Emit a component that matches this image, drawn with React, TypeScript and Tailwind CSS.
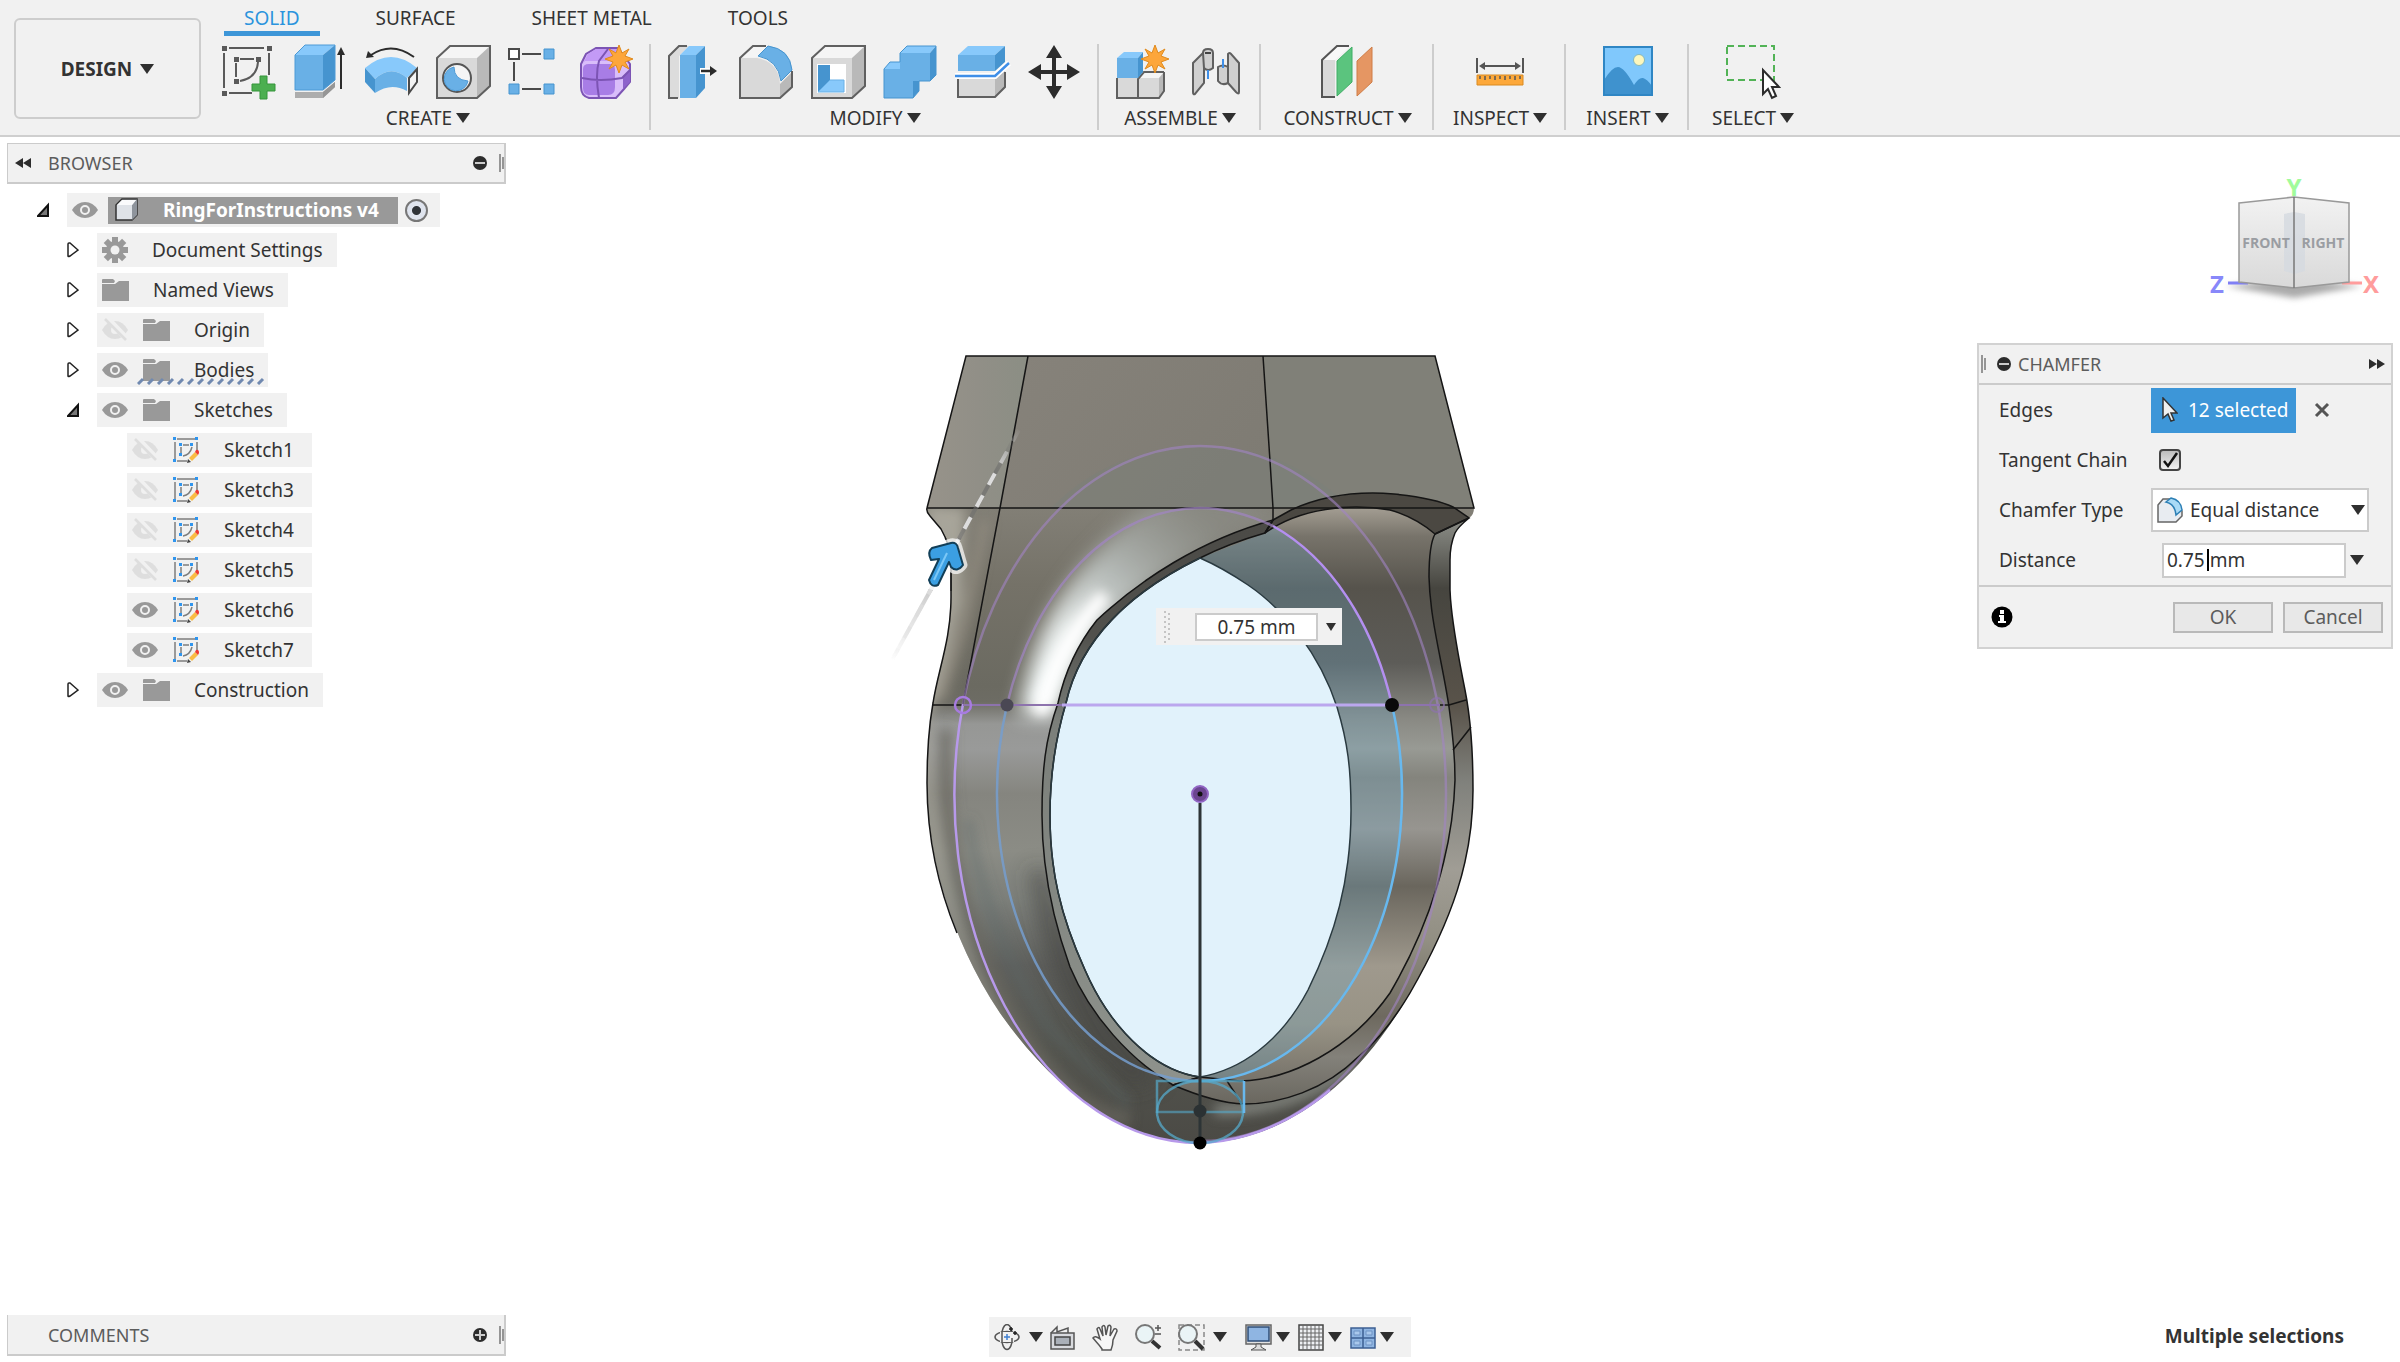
import { useState } from "react";
import type { ReactNode } from "react";
import clsx from "clsx";

const MODEL_OUTLINE =
  "M966 356H1435L1474 508Q1474 515 1469 518Q1458 527 1455 533Q1450 545 1450 560V590C1451 620 1460 665 1465 690C1470 715 1473 745 1473 790C1473 860 1452 920 1410 993C1350 1098 1270 1143 1200 1143C1130 1143 1060 1098 1000 1013C948 935 927 850 927 783C927 745 930 720 933 703C938 670 951 640 951 597V560Q950 545 941 529L930 516Q926 512 927 508Z";

const OPENING =
  "M1200 558Q1223 568 1248 585C1285 610 1320 655 1337 707C1348 743 1351 770 1351 810C1351 880 1335 935 1308 990C1280 1043 1240 1070 1200 1077C1150 1070 1108 1023 1085 970C1060 915 1050 870 1050 815C1050 770 1058 730 1066 703C1080 640 1130 592 1200 558Z";

const INNER_WALL =
  "M1200 558L1265 533C1300 508 1350 503 1390 510Q1415 517 1435 534Q1429 545 1429 577C1430 620 1442 660 1449 707C1453 735 1455 760 1455 780C1453 850 1430 925 1390 993C1350 1050 1290 1080 1240 1081L1200 1077C1240 1070 1280 1043 1308 990C1335 935 1351 880 1351 810C1351 770 1348 743 1337 707C1320 655 1285 610 1248 585Q1223 568 1200 558Z";

const RIM_STRIP =
  "M1273 520C1200 540 1140 580 1097 620C1073 650 1063 680 1058 703C1045 740 1042 770 1042 815C1042 870 1053 920 1070 967C1090 1015 1130 1060 1173 1085L1200 1077C1150 1070 1108 1023 1085 970C1060 915 1050 870 1050 815C1050 770 1058 730 1066 703C1080 640 1130 592 1200 558Q1230 543 1265 533Z";

const TOP_LIP =
  "M1273 520L1291 510C1330 492 1370 492 1394 494Q1435 498 1453 507L1469 518L1435 534Q1415 517 1390 510C1350 503 1300 508 1265 533Z";

const OUTER_RIGHT =
  "M1435 534L1469 518Q1458 527 1455 533Q1450 545 1450 560V590C1451 620 1460 665 1465 690C1470 715 1473 745 1473 790C1473 860 1452 920 1410 993Q1385 1035 1358 1057C1325 1090 1280 1104 1244 1104Q1215 1103 1173 1085L1200 1077L1240 1081C1290 1080 1350 1050 1390 993C1430 925 1453 850 1455 780C1455 760 1453 735 1449 707C1442 660 1430 620 1429 577Q1429 545 1435 534Z";

function Caret({ className = "w-3.5 h-2.5" }: { className?: string }) {
  return (
    <svg viewBox="0 0 14 10" preserveAspectRatio="none" className={clsx("shrink-0 fill-[#2f2f2f]", className)}>
      <path d="M0 0H14L7 10Z" />
    </svg>
  );
}

function Icon({ children, className = "size-14" }: { children: ReactNode; className?: string }) {
  return (
    <svg viewBox="0 0 56 56" fill="none" className={clsx("shrink-0", className)}>
      {children}
    </svg>
  );
}

const STAR = "M0-14L3-6L10-10L6-3L14 0L6 3L10 10L3 6L0 14L-3 6L-10 10L-6 3L-14 0L-6-3L-10-10L-3-6Z";

function SketchIcon() {
  return (
    <Icon>
      <g stroke="#5a5a5a" strokeWidth="2">
        <path d="M9 4H44M4 9V44M49 9V31M9 49H32M20 15H34M16 19V33M38 18Q37 34 20 37" />
      </g>
      <g fill="#5a5a5a">
        <path d="M2 2h5v5H2zM47 2h5v5h-5zM2 47h5v5H2zM14 13h5v5h-5zM36 13h5v5h-5zM14 35h5v5h-5z" />
      </g>
      <path d="M40 32h7v8h8v7h-8v8h-7v-8h-8v-7h8z" fill="#4caf50" stroke="#35953a" />
    </Icon>
  );
}

function ExtrudeIcon() {
  return (
    <Icon>
      <path d="M3 48H31L43 38V43L31 54H3Z" fill="#adadad" />
      <path d="M31 48L43 38V43L31 54Z" fill="#969696" />
      <path d="M3 11H31V46H3Z" fill="#69b0e6" />
      <path d="M3 11L13 1H43L31 11Z" fill="#88c9fb" />
      <path d="M31 11L43 1V36L31 46Z" fill="#4694cf" />
      <path d="M3 11L13 1H43V36L31 46H3Z" stroke="#4c9ad6" />
      <path d="M49 9V45" stroke="#2c2c2c" strokeWidth="2" />
      <path d="M49 3L53 11H45Z" fill="#2c2c2c" />
    </Icon>
  );
}

function RevolveIcon() {
  return (
    <Icon>
      <path d="M50 13Q28-3 7 11" stroke="#2c2c2c" strokeWidth="2" />
      <path d="M2 14L4 7L10 13Z" fill="#2c2c2c" />
      <path d="M1 24Q27 2 53 24L43 34Q27 20 11 35Z" fill="#88c9fb" />
      <path d="M11 35Q27 20 43 34V47Q27 38 11 49Z" fill="#69b0e6" />
      <path d="M1 24L11 35V49L1 38Z" fill="#4694cf" />
      <path d="M53 25L45 34V49L53 38Z" fill="#f4f4f4" stroke="#4a4a4a" strokeWidth="2" />
    </Icon>
  );
}

function Box({ window: win }: { window?: ReactNode }) {
  return (
    <>
      <path d="M1 14H41V54H1Z" fill="#d9d9d9" />
      <path d="M1 14L14 2H54L41 14Z" fill="#f5f5f5" />
      <path d="M41 14L54 2V42L41 54Z" fill="#b9b9b9" />
      <path d="M1 14L14 2H54V42L41 54H1Z" stroke="#606060" strokeWidth="2" />
      {win}
    </>
  );
}

function HoleIcon() {
  return (
    <Icon>
      <Box
        window={
          <>
            <circle cx="21" cy="34" r="14" fill="#f5f5f5" stroke="#555" strokeWidth="2" />
            <path d="M18 23A12 12 0 1 0 32 37Q18 36 18 23Z" fill="#69b0e6" stroke="#4c9ad6" />
          </>
        }
      />
    </Icon>
  );
}

function PatternIcon() {
  return (
    <Icon>
      <path d="M14 10H33M6 18V37M14 45H33" stroke="#4a4a4a" strokeWidth="2" />
      <path d="M1 5h10v10H1z" fill="#fff" stroke="#4a4a4a" strokeWidth="2" />
      <path d="M36 5h10v10H36zM1 40h10v10H1zM36 40h10v10H36z" fill="#69b0e6" stroke="#4694cf" />
    </Icon>
  );
}

function FormIcon() {
  return (
    <Icon>
      <path d="M1 20L6 10L16 4H38L50 20V38L44 45L36 54H9Q1 52 1 43Z" fill="#d9bdfa" stroke="#7c54b4" strokeWidth="2" />
      <path d="M3 19L8 10L16 5H38L34 17H5Z" fill="#c39af6" />
      <path d="M9 20H30Q35 20 35 26V43Q35 51 28 51H9Q3 51 3 44V25Q3 20 9 20Z" fill="#a87de6" />
      <path d="M43 32L50 26V38L43 45Z" fill="#8d62cb" />
      <path d="M2 34Q20 38 42 34L50 26M19 54Q15 30 19 17L28 5" stroke="#7c54b4" strokeWidth="2" />
      <path d={STAR} transform="translate(39 15)" fill="#fda63a" stroke="#e08a1c" />
    </Icon>
  );
}

function PressPullIcon() {
  return (
    <Icon>
      <path d="M2 12L12 2H22L12 12V54H2Z" fill="#dcdcdc" />
      <path d="M20 2H12L2 12V54H11" stroke="#606060" strokeWidth="2" />
      <path d="M13 11H29V54H13Z" fill="#69b0e6" />
      <path d="M13 11L22 2H38L29 11Z" fill="#88c9fb" />
      <path d="M29 11L38 2V44L29 54Z" fill="#4694cf" />
      <path d="M33 27H44" stroke="#fff" strokeWidth="6" />
      <path d="M34 27H45" stroke="#2c2c2c" strokeWidth="2.5" />
      <path d="M43 22L50 27L43 32Z" fill="#2c2c2c" />
    </Icon>
  );
}

function FilletIcon() {
  return (
    <Icon>
      <path d="M1 14H18Q40 18 41 40V54H1Z" fill="#d9d9d9" />
      <path d="M1 14L14 2H28L18 13Z" fill="#f5f5f5" />
      <path d="M41 40L53 28V43L41 54Z" fill="#b9b9b9" />
      <path d="M27 2H14L1 14V54H41L53 43V27" stroke="#606060" strokeWidth="2" />
      <path d="M19 12L29 2Q51 5 53 26L42 37Q39 16 19 12Z" fill="#69b0e6" stroke="#4694cf" />
    </Icon>
  );
}

function ShellIcon() {
  return (
    <Icon>
      <Box
        window={
          <>
            <path d="M6 20H35V49H6Z" fill="#fff" />
            <path d="M7 21H19V37L7 48Z" fill="#4694cf" />
            <path d="M19 36H33V48H7Z" fill="#88c9fb" stroke="#69b0e6" />
          </>
        }
      />
    </Icon>
  );
}

function CombineIcon() {
  return (
    <Icon>
      <path d="M1 25H17V9H47V37H30V54H1Z" fill="#69b0e6" />
      <path d="M1 25L7 18H17V25ZM17 9L24 2H53L47 9Z" fill="#88c9fb" />
      <path d="M47 9L53 2V31L47 37ZM30 37H36V47L30 54Z" fill="#4694cf" />
      <path d="M1 25L7 18H17V9L24 2H53V31L47 37H36V47L30 54H1Z" stroke="#4694cf" />
    </Icon>
  );
}

function SplitIcon() {
  return (
    <Icon>
      <path d="M3 11H40V27H3Z" fill="#69b0e6" />
      <path d="M3 11L13 2H50L40 11Z" fill="#88c9fb" />
      <path d="M40 11L50 2V18L40 27Z" fill="#4694cf" />
      <path d="M3 35H40L50 27V43L40 53H3Z" fill="#d9d9d9" />
      <path d="M40 35L50 27V43L40 53Z" fill="#b9b9b9" />
      <path d="M3 35V53H40L50 43V28" stroke="#606060" strokeWidth="2" />
      <path d="M0 32H40L54 19" stroke="#fff" strokeWidth="6" />
      <path d="M0 32H40L54 19" stroke="#3f8fe8" strokeWidth="2.5" />
    </Icon>
  );
}

function MoveIcon() {
  return (
    <Icon>
      <path d="M27 10V44M10 28H44" stroke="#2c2c2c" strokeWidth="4" />
      <path d="M27 1L35 14H19ZM27 55L35 42H19ZM1 28L14 20V36ZM53 28L40 20V36Z" fill="#2c2c2c" />
    </Icon>
  );
}

function ComponentIcon() {
  return (
    <Icon>
      <path d="M1 34H43V54H1Z" fill="#d9d9d9" />
      <path d="M22 34L28 28H48L43 34Z" fill="#f5f5f5" />
      <path d="M43 34L48 28V47L43 54Z" fill="#b9b9b9" />
      <path d="M1 34V54H43L48 47V28M22 54V35L28 28H48" stroke="#606060" strokeWidth="2" />
      <path d="M1 14H22V34H1Z" fill="#69b0e6" />
      <path d="M1 14L8 8H27L22 14Z" fill="#88c9fb" />
      <path d="M22 14L27 8V28L22 34Z" fill="#4694cf" />
      <path d={STAR} transform="translate(39 15)" fill="#fda63a" stroke="#e08a1c" />
    </Icon>
  );
}

function JointIcon() {
  return (
    <Icon>
      <g stroke="#606060" strokeWidth="2" fill="#d0d0d0">
        <path d="M5 19L16 8V39L7 50Q5 51 5 48Z" />
        <path d="M15 9Q15 5 20 5T25 9V24Q20 28 16 24Z" />
        <path d="M40 10Q42 8 43 10L51 19V48Q51 51 48 48L40 39Z" />
        <path d="M30 23Q35 20 40 23V39Q34 42 30 37Z" />
      </g>
      <path d="M17 9H23" stroke="#444" strokeWidth="2" />
      <path d="M20 26V35M35 15V24" stroke="#3f8fe8" strokeWidth="2" />
    </Icon>
  );
}

function PlaneIcon() {
  return (
    <Icon>
      <path d="M2 16H15V53H2Z" fill="#d9d9d9" />
      <path d="M2 16L17 2H30L15 16Z" fill="#f8f8f8" />
      <path d="M29 2H17L2 16V53H15" stroke="#555" strokeWidth="2" />
      <path d="M17 17L32 3V38L17 52Z" fill="#5bc47e" stroke="#3fae65" />
      <path d="M37 17L52 3V38L37 52Z" fill="#e59663" stroke="#cf7c46" />
    </Icon>
  );
}

function MeasureIcon() {
  return (
    <Icon>
      <path d="M5 14V29M51 14V29M10 22H46" stroke="#555" strokeWidth="2" />
      <path d="M7 22L13 18V26ZM49 22L43 18V26Z" fill="#555" />
      <path d="M5 31H51V41H5Z" fill="#fda83a" stroke="#d98a20" />
      <path d="M8 32V35M13 32V36M18 32V35M23 32V36M28 32V35M33 32V36M38 32V35M43 32V36M48 32V35" stroke="#555" strokeWidth="1.5" />
    </Icon>
  );
}

function ImageIcon() {
  return (
    <Icon>
      <path d="M4 3H52V51H4Z" fill="#80c8fc" />
      <path d="M4 36Q12 23 18 23T34 41Q39 33 43 34T52 42V51H4Z" fill="#3f92ce" />
      <circle cx="39" cy="16" r="5.5" fill="#fdf7bd" stroke="#88b8b8" />
      <path d="M4 3H52V51H4Z" stroke="#2f86c4" strokeWidth="2" />
    </Icon>
  );
}

function SelectIcon() {
  return (
    <Icon>
      <path d="M2 2H49V36H2Z" stroke="#52b356" strokeWidth="2" strokeDasharray="7 4" />
      <path d="M38 26V50L43 45L47 54L51 52L47 43H54Z" fill="#fff" stroke="#2c2c2c" strokeWidth="2" />
    </Icon>
  );
}

const TABS = ["SOLID", "SURFACE", "SHEET METAL", "TOOLS"];

const GROUPS: { label: string; width: string; tools: { name: string; icon: ReactNode }[] }[] = [
  {
    label: "CREATE",
    width: "w-[446px]",
    tools: [
      { name: "Create Sketch", icon: <SketchIcon /> },
      { name: "Extrude", icon: <ExtrudeIcon /> },
      { name: "Revolve", icon: <RevolveIcon /> },
      { name: "Hole", icon: <HoleIcon /> },
      { name: "Rectangular Pattern", icon: <PatternIcon /> },
      { name: "Create Form", icon: <FormIcon /> },
    ],
  },
  {
    label: "MODIFY",
    width: "w-[448px]",
    tools: [
      { name: "Press Pull", icon: <PressPullIcon /> },
      { name: "Fillet", icon: <FilletIcon /> },
      { name: "Shell", icon: <ShellIcon /> },
      { name: "Combine", icon: <CombineIcon /> },
      { name: "Split Body", icon: <SplitIcon /> },
      { name: "Move", icon: <MoveIcon /> },
    ],
  },
  {
    label: "ASSEMBLE",
    width: "w-[162px]",
    tools: [
      { name: "New Component", icon: <ComponentIcon /> },
      { name: "Joint", icon: <JointIcon /> },
    ],
  },
  { label: "CONSTRUCT", width: "w-[173px]", tools: [{ name: "Offset Plane", icon: <PlaneIcon /> }] },
  { label: "INSPECT", width: "w-[132px]", tools: [{ name: "Measure", icon: <MeasureIcon /> }] },
  { label: "INSERT", width: "w-[123px]", tools: [{ name: "Canvas", icon: <ImageIcon /> }] },
  { label: "SELECT", width: "w-[126px]", tools: [{ name: "Select", icon: <SelectIcon /> }] },
];

function Toolbar() {
  const [tab, setTab] = useState("SOLID");
  return (
    <header className="flex h-[137px] border-b-2 border-[#cfcfcf] bg-[#f1f1f1]">
      <button className="mt-[18px] ml-3.5 flex h-[101px] w-[187px] shrink-0 items-center justify-center gap-2 rounded-md border-2 border-[#cdcdcd] font-bold">
        DESIGN
        <Caret />
      </button>
      <div className="ml-1 flex flex-col">
        <nav className="ml-[19px] flex h-9 gap-9">
          {TABS.map((name) => (
            <button
              key={name}
              onClick={() => setTab(name)}
              className={clsx(
                "border-b-[5px] px-5 pt-1",
                tab === name ? "border-[#3d96d8] text-[#2b94dd]" : "border-transparent"
              )}
            >
              {name}
            </button>
          ))}
        </nav>
        <div className="mt-2 flex h-[86px]">
          {GROUPS.map((group) => (
            <div
              key={group.label}
              className={clsx(
                "flex shrink-0 flex-col items-center border-r-2 border-[#cdcdcd] pl-0.5 last:border-r-0",
                group.width
              )}
            >
              <div className="flex gap-4">
                {group.tools.map((tool) => (
                  <button key={tool.name} aria-label={tool.name}>
                    {tool.icon}
                  </button>
                ))}
              </div>
              <button className="mt-1.5 flex items-center gap-1 leading-6">
                {group.label}
                <Caret />
              </button>
            </div>
          ))}
        </div>
      </div>
    </header>
  );
}

function Eye({ off }: { off?: boolean }) {
  return (
    <button aria-label="Toggle visibility" className="shrink-0">
      <svg viewBox="0 0 26 26" fill="none" className="size-[26px]">
        {off ? (
          <>
            <path d="M0 13Q5 4 13 4T26 13Q21 22 13 22T0 13Z" fill="#dedede" />
            <circle cx="13" cy="13" r="4" fill="#f1f1f1" />
            <path d="M4 0L26 23" stroke="#f1f1f1" strokeWidth="6" />
            <path d="M3 2L24 23" stroke="#dedede" strokeWidth="2.5" />
          </>
        ) : (
          <>
            <path d="M0 13Q5 5 13 5T26 13Q21 21 13 21T0 13Z" fill="#999" />
            <circle cx="13" cy="13" r="4" stroke="#f1f1f1" strokeWidth="2" />
          </>
        )}
      </svg>
    </button>
  );
}

function Folder() {
  return (
    <svg viewBox="0 0 27 26" className="h-[26px] w-[27px] shrink-0 fill-[#999]">
      <path d="M0 3Q0 2 1 2H11L13 4L12 6H0ZM0 7H13L17 4H27V24H0Z" />
    </svg>
  );
}

function Gear() {
  return (
    <svg viewBox="-13 -13 26 26" className="size-[26px] shrink-0 fill-[#999]">
      {[0, 45, 90, 135].map((angle) => (
        <rect key={angle} x="-3" y="-13" width="6" height="26" transform={`rotate(${angle})`} />
      ))}
      <circle r="9" />
      <circle r="4.5" className="fill-[#f1f1f1]" />
    </svg>
  );
}

function SketchItemIcon() {
  return (
    <svg viewBox="0 0 27 27" fill="none" className="size-[27px] shrink-0">
      <path d="M4 2H22M2 5V22M24 5V14M4 24H14M10 8H16M8 10V16M19 10Q17 18 10 19" stroke="#7d7d7d" strokeWidth="1.5" />
      <path d="M0 0h3v3H0zM22 0h3v3h-3zM0 22h3v3H0zM6 6h3v3H6zM17 6h3v3h-3zM6 16h3v3H6z" fill="#2f95ee" />
      <path d="M16 21L22 15L25 18L19 24Z" fill="#f9bc45" />
      <path d="M22 15L23 13Q26 12 26 16L25 18Z" fill="#ee3a35" />
      <path d="M14 26L15 22L18 25Z" fill="#444" />
    </svg>
  );
}

function Expander({ open }: { open?: boolean }) {
  return (
    <button aria-label={open ? "Collapse" : "Expand"} className="shrink-0">
      <svg viewBox="0 0 12 16" fill="none" className="h-4 w-3">
        {open ? (
          <path d="M1 14L11 3V14Z" fill="#777" stroke="#111" strokeWidth="2" />
        ) : (
          <path d="M2 1Q1 1 1 2V14Q1 15 3 14L11 8L3 1Z" stroke="#222" strokeWidth="1.5" />
        )}
      </svg>
    </button>
  );
}

interface TreeItem {
  label: string;
  kind: "settings" | "views" | "folder" | "sketch";
  hidden?: boolean;
  open?: boolean;
  marked?: boolean;
}

const TREE: TreeItem[] = [
  { label: "Document Settings", kind: "settings" },
  { label: "Named Views", kind: "views" },
  { label: "Origin", kind: "folder", hidden: true },
  { label: "Bodies", kind: "folder", marked: true },
  { label: "Sketches", kind: "folder", open: true },
  { label: "Sketch1", kind: "sketch", hidden: true },
  { label: "Sketch3", kind: "sketch", hidden: true },
  { label: "Sketch4", kind: "sketch", hidden: true },
  { label: "Sketch5", kind: "sketch", hidden: true },
  { label: "Sketch6", kind: "sketch" },
  { label: "Sketch7", kind: "sketch" },
  { label: "Construction", kind: "folder" },
];

function TreeRow({ item }: { item: TreeItem }) {
  if (item.kind === "sketch") {
    return (
      <li className="ml-[127px] flex h-[34px] w-[185px] items-center bg-[#f1f1f1] pl-[5px]">
        <Eye off={item.hidden} />
        <span className="ml-[15px]">
          <SketchItemIcon />
        </span>
        <span className="ml-6">{item.label}</span>
      </li>
    );
  }
  const single = item.kind !== "folder";
  return (
    <li className="ml-[67px] flex h-[34px] items-center">
      <Expander open={item.open} />
      <div className="relative ml-[18px] flex h-full items-center bg-[#f1f1f1] pr-3.5 pl-[5px]">
        {item.kind === "settings" && <Gear />}
        {item.kind === "views" && <Folder />}
        {!single && (
          <>
            <Eye off={item.hidden} />
            <span className="ml-[15px]">
              <Folder />
            </span>
          </>
        )}
        <span className="ml-6">{item.label}</span>
        {item.marked && (
          <svg className="absolute bottom-0.5 left-10 h-2 w-32">
            <path
              d="M1 7l5-5m5 5l5-5m5 5l5-5m5 5l5-5m5 5l5-5m5 5l5-5m5 5l5-5m5 5l5-5m5 5l5-5m5 5l5-5m5 5l5-5m5 5l5-5m5 5l5-5"
              stroke="#7089b0"
              strokeWidth="3"
            />
          </svg>
        )}
      </div>
    </li>
  );
}

function DockHandle() {
  return (
    <svg viewBox="0 0 5 18" className="h-[18px] w-[5px] shrink-0">
      <path d="M1 0V18M4 3V15" stroke="#777" strokeWidth="1.5" />
    </svg>
  );
}

function RoundSign({ plus }: { plus?: boolean }) {
  return (
    <svg viewBox="0 0 14 14" fill="none" className="size-3.5">
      <circle cx="7" cy="7" r="7" fill="#2c2c2c" />
      <path d={plus ? "M2 7H12M7 2V12" : "M2 7H12"} stroke="#ccc" strokeWidth="2" />
    </svg>
  );
}

function DoubleArrow({ right }: { right?: boolean }) {
  return (
    <svg viewBox="0 0 16 10" className="h-2.5 w-4 fill-[#2c2c2c]">
      <path d={right ? "M0 0L8 5V0L16 5L8 10V5L0 10Z" : "M16 0L8 5V0L0 5L8 10V5L16 10Z"} />
    </svg>
  );
}

function Browser() {
  return (
    <section>
      <div className="mt-1.5 ml-[7px] flex h-[41px] w-[499px] items-center border-t border-r-2 border-b-2 border-l border-[#cbcbcb] bg-[#f1f1f1] pl-[7px]">
        <button aria-label="Collapse browser">
          <DoubleArrow />
        </button>
        <h2 className="ml-[17px] flex-1 text-lg text-[#5c5c5c]">BROWSER</h2>
        <button aria-label="Minimise browser" className="mr-3">
          <RoundSign />
        </button>
        <DockHandle />
      </div>
      <ul className="mt-[9px] flex flex-col gap-1.5">
        <li className="ml-[37px] flex h-[34px] items-center">
          <Expander open />
          <div className="ml-[18px] flex h-full items-center bg-[#f1f1f1] pr-3 pl-[5px]">
            <Eye />
            <div className="ml-2.5 flex h-[27px] w-[290px] items-center bg-[#999] pl-[7px] font-bold text-white">
              <svg viewBox="0 0 24 24" className="size-6">
                <path d="M1 7L7 1H22V17L17 22H1Z" fill="#dfe3e8" stroke="#333" strokeWidth="1.5" />
                <path d="M17 7L22 1V17L17 22Z" fill="#8e949c" />
                <path d="M2 7L7 2H21L17 7Z" fill="#fafbfc" />
              </svg>
              <span className="ml-6">RingForInstructions v4</span>
            </div>
            <input
              type="radio"
              name="active-component"
              defaultChecked
              aria-label="Activate component"
              className="ml-[7px] size-[23px] appearance-none rounded-full border-2 border-[#777] bg-[radial-gradient(circle,#2f3338_0_4px,#dfe4ee_5px)]"
            />
          </div>
        </li>
        {TREE.map((item) => (
          <TreeRow key={item.label} item={item} />
        ))}
      </ul>
    </section>
  );
}

function Comments() {
  return (
    <section className="mb-1.5 ml-[7px] flex h-[41px] w-[499px] items-center border-r-2 border-b-2 border-l border-[#cbcbcb] bg-[#f1f1f1] pl-10">
      <h2 className="flex-1 text-lg text-[#5c5c5c]">COMMENTS</h2>
      <button aria-label="Expand comments" className="mr-3">
        <RoundSign plus />
      </button>
      <DockHandle />
    </section>
  );
}

function RingModel() {
  return (
    <svg viewBox="880 340 640 820" fill="none" className="h-[820px] w-[640px]">
      <defs>
        <clipPath id="body">
          <path d={MODEL_OUTLINE} />
        </clipPath>
        <clipPath id="wall">
          <path d={INNER_WALL} />
        </clipPath>
        <linearGradient id="bodyFill" x1="0" y1="508" x2="0" y2="1143" gradientUnits="userSpaceOnUse">
          <stop offset="0" stopColor="#827f76" />
          <stop offset=".12" stopColor="#757268" />
          <stop offset=".28" stopColor="#6b6a61" />
          <stop offset=".305" stopColor="#6d6c64" />
          <stop offset=".34" stopColor="#969795" />
          <stop offset=".38" stopColor="#999a99" />
          <stop offset=".45" stopColor="#85857f" />
          <stop offset=".54" stopColor="#8b8c85" />
          <stop offset=".62" stopColor="#7b7e79" />
          <stop offset=".72" stopColor="#5e5f5c" />
          <stop offset=".85" stopColor="#53544e" />
          <stop offset="1" stopColor="#4b4a45" />
        </linearGradient>
        <linearGradient id="wallFill" x1="0" y1="508" x2="0" y2="1081" gradientUnits="userSpaceOnUse">
          <stop offset="0" stopColor="#a39d92" />
          <stop offset=".05" stopColor="#77736a" />
          <stop offset=".14" stopColor="#56534c" />
          <stop offset=".27" stopColor="#5d5c58" />
          <stop offset=".37" stopColor="#8a8a84" />
          <stop offset=".42" stopColor="#989a94" />
          <stop offset=".47" stopColor="#84847d" />
          <stop offset=".56" stopColor="#979590" />
          <stop offset=".66" stopColor="#6a665d" />
          <stop offset=".8" stopColor="#9f998d" />
          <stop offset=".9" stopColor="#989385" />
          <stop offset="1" stopColor="#77736a" />
        </linearGradient>
        <linearGradient id="rightFill" x1="0" y1="518" x2="0" y2="1104" gradientUnits="userSpaceOnUse">
          <stop offset="0" stopColor="#8d8f89" />
          <stop offset=".12" stopColor="#46453f" />
          <stop offset=".32" stopColor="#59534a" />
          <stop offset=".45" stopColor="#80817c" />
          <stop offset=".6" stopColor="#a09d95" />
          <stop offset=".72" stopColor="#928f83" />
          <stop offset=".85" stopColor="#6e695f" />
          <stop offset=".92" stopColor="#83817a" />
          <stop offset="1" stopColor="#6a675f" />
        </linearGradient>
        <linearGradient id="stripFill" x1="0" y1="520" x2="0" y2="1100" gradientUnits="userSpaceOnUse">
          <stop offset="0" stopColor="#4b4a46" />
          <stop offset=".2" stopColor="#51514d" />
          <stop offset=".35" stopColor="#7b7f7a" />
          <stop offset="1" stopColor="#8f938d" />
        </linearGradient>
        <linearGradient id="headLeft" x1="927" y1="0" x2="1028" y2="0" gradientUnits="userSpaceOnUse">
          <stop offset="0" stopColor="#97938a" />
          <stop offset=".5" stopColor="#918f87" />
          <stop offset="1" stopColor="#8b8e84" />
        </linearGradient>
        <linearGradient id="headMid" x1="1020" y1="360" x2="1230" y2="520" gradientUnits="userSpaceOnUse">
          <stop offset="0" stopColor="#86827a" />
          <stop offset="1" stopColor="#7e7b73" />
        </linearGradient>
        <linearGradient id="shine" x1="1200" y1="510" x2="1040" y2="715" gradientUnits="userSpaceOnUse">
          <stop offset="0" stopColor="#8e908a" stopOpacity=".6" />
          <stop offset=".4" stopColor="#b4b9b6" />
          <stop offset=".7" stopColor="#e9eeed" />
          <stop offset="1" stopColor="#f4fafa" />
        </linearGradient>
        <linearGradient id="guide" x1="892" y1="660" x2="1020" y2="428" gradientUnits="userSpaceOnUse">
          <stop offset="0" stopColor="#ddd" stopOpacity="0" />
          <stop offset=".3" stopColor="#ddd" />
          <stop offset=".8" stopColor="#ddd" />
          <stop offset="1" stopColor="#ddd" stopOpacity="0" />
        </linearGradient>
        <linearGradient id="guideBase" x1="892" y1="660" x2="1020" y2="428" gradientUnits="userSpaceOnUse">
          <stop offset="0" stopColor="#777" stopOpacity="0" />
          <stop offset=".4" stopColor="#777" stopOpacity=".5" />
          <stop offset=".8" stopColor="#666" stopOpacity=".6" />
          <stop offset="1" stopColor="#777" stopOpacity="0" />
        </linearGradient>
        <filter id="soft" x="-50%" y="-50%" width="200%" height="200%">
          <feGaussianBlur stdDeviation="10" />
        </filter>
        <filter id="softer" x="-50%" y="-50%" width="200%" height="200%">
          <feGaussianBlur stdDeviation="6" />
        </filter>
      </defs>

      <path d={MODEL_OUTLINE} fill="url(#bodyFill)" />
      <g clipPath="url(#body)">
        <g filter="url(#soft)">
          <path d="M1240 495H1160C1090 550 1035 610 1020 715H1060C1080 640 1140 570 1290 520Z" fill="url(#shine)" />
          <path d="M1045 870Q1070 980 1160 1080L1130 1090Q1050 1010 1030 870Z" fill="#474641" opacity=".7" />
        </g>
        <g filter="url(#softer)">
          <path d="M1110 600C1075 640 1055 680 1048 716L1033 714C1040 670 1070 620 1100 590Z" fill="#fff" />
          <path d="M925 505L965 508L962 600L935 705L920 720L940 600Z" fill="#b1afa4" opacity=".8" />
          <path d="M985 520L965 620L940 700" stroke="#8e897e" strokeWidth="10" />
          <path d="M925 700Q920 870 985 995T1130 1150" stroke="#a8a599" strokeWidth="12" opacity=".6" />
          <path d="M946 730Q940 870 1000 990T1130 1120" stroke="#6b6961" strokeWidth="14" opacity=".7" />
          <path d="M968 820Q985 930 1050 1030L1130 1105" stroke="#5b6769" strokeWidth="8" opacity=".5" />
          <path d="M1215 1110Q1290 1112 1355 1064" stroke="#878a84" strokeWidth="10" />
        </g>
      </g>

      <path d="M966 356H1028L1000 508H927Z" fill="url(#headLeft)" />
      <path d="M1028 356H1263L1273 508H1000Z" fill="url(#headMid)" />
      <path d="M1263 356H1435L1474 508H1273Z" fill="#808078" />
      <path d="M1051 508Q1110 448 1200 447T1350 508Z" fill="#79807b" opacity=".35" />

      <path d={OUTER_RIGHT} fill="url(#rightFill)" />
      <path d={INNER_WALL} fill="url(#wallFill)" />
      <g clipPath="url(#wall)">
        <ellipse cx="1200" cy="794" rx="203" ry="287" fill="#6bacd0" opacity=".26" />
      </g>
      <path d={TOP_LIP} fill="#4b4842" />
      <path d={RIM_STRIP} fill="url(#stripFill)" />
      <path d={OPENING} fill="#e1f2fb" />

      <g stroke="#151515" strokeWidth="1.5">
        <path d="M927 508L966 356H1435L1474 508H927M1028 356L1000 508L963 704M1263 356L1270 461L1273 508V520L1265 533" />
        <path d="M927 508Q926 512 930 516L941 529Q950 545 951 560V597C951 640 938 670 933 703C930 720 927 745 927 783Q927 860 957 933" />
        <path d={OUTER_RIGHT} />
        <path d={TOP_LIP} />
        <path d={RIM_STRIP} />
        <path d={OPENING} stroke="#2a3a40" />
        <path d="M933 705H1058M1392 705H1449L1466 700M1453 750L1471 727" />
        <path d="M1227 1081L1242 1104" />
      </g>

      <g strokeWidth="2.5">
        <path d="M963 704A246 348 0 0 1 1200 446A246 348 0 0 1 1446 793A246 348 0 0 1 1200 1141" stroke="#a184c4" opacity=".6" />
        <path d="M963 704A246 348 0 0 0 1200 1143Q1270 1140 1330 1090" stroke="#b799ea" />
        <path d="M1007 705A203 287 0 0 1 1200 508Q1235 508 1273 526" stroke="#a184c4" opacity=".7" />
        <path d="M1273 526A203 287 0 0 1 1392 705" stroke="#b48ff0" />
        <path d="M1007 705A203 287 0 0 0 1200 1081" stroke="#759dce" opacity=".85" />
        <path d="M1392 705A203 287 0 0 1 1200 1081" stroke="#68b8ee" />
      </g>
      <path d="M963 705H1062M1335 705H1440" stroke="#8d73ad" strokeWidth="2" />
      <path d="M1062 705H1392" stroke="#bba7ee" strokeWidth="3" />

      <g stroke="#55aacb" strokeWidth="2.5">
        <path d="M1157 1113V1081H1244" opacity=".7" />
        <path d="M1157 1112H1244" opacity=".6" />
        <ellipse cx="1200" cy="1112" rx="43" ry="31" opacity=".75" />
        <path d="M1244 1081V1113" stroke="#68b8ee" />
      </g>
      <path d="M1200 803V1142" stroke="#2d3436" strokeWidth="3" />
      <circle cx="1200" cy="794" r="8" fill="#6b4690" stroke="#9166c4" strokeWidth="2" />
      <circle cx="1200" cy="794" r="2.5" fill="#111" />
      <circle cx="1392" cy="705" r="7" fill="#0a0a0a" />
      <circle cx="1200" cy="1143" r="6.5" fill="#000" />
      <circle cx="1007" cy="705" r="6.5" fill="#4a4854" />
      <circle cx="1200" cy="1111" r="6.5" fill="#2b3133" />
      <circle cx="963" cy="705" r="8" stroke="#a77be0" strokeWidth="2.5" />
      <circle cx="1437" cy="705" r="7" stroke="#8d73ad" strokeWidth="2" opacity=".7" />

      <path d="M892 660L1020 428" stroke="url(#guideBase)" strokeWidth="4" />
      <path d="M892 660L1020 428" stroke="url(#guide)" strokeWidth="4" strokeDasharray="13 12" />
      <path
        d="M929 580L939 559L931 560Q927 552 932 548L951 543Q957 542 958 548L963 565Q957 573 951 567L949 562L938 585Q931 588 929 580Z"
        fill="#3b9fe2"
        stroke="#fff"
        strokeWidth="9"
        strokeLinejoin="round"
        opacity=".7"
      />
      <path
        d="M929 580L939 559L931 560Q927 552 932 548L951 543Q957 542 958 548L963 565Q957 573 951 567L949 562L938 585Q931 588 929 580Z"
        fill="#3b9fe2"
        stroke="#123f58"
        strokeWidth="2"
        strokeLinejoin="round"
      />
      <path d="M934 580L947 553" stroke="#7cc8f6" strokeWidth="2" />
    </svg>
  );
}

function FloatingValue() {
  return (
    <div className="absolute top-[268px] left-[276px] flex h-[37px] w-[186px] items-center bg-[#f1f1f1] pl-2">
      <svg viewBox="0 0 6 32" className="h-8 w-1.5">
        <path d="M1 0V32M5 2V32" stroke="#b5b5b5" strokeWidth="1.5" strokeDasharray="2 3" />
      </svg>
      <input
        aria-label="Chamfer distance"
        defaultValue="0.75 mm"
        className="ml-[25px] h-7 w-[123px] border-2 border-[#cbcbcb] bg-white text-center leading-6"
      />
      <button aria-label="Distance options" className="ml-2">
        <Caret className="h-2 w-2.5" />
      </button>
    </div>
  );
}

function NavBar() {
  return (
    <nav className="mb-[5px] flex h-10 w-[422px] items-center bg-[#f1f1f1] pl-[5px]">
      <button aria-label="Orbit" className="flex items-center gap-2">
        <svg viewBox="0 0 27 27" fill="none" className="size-[27px]">
          <ellipse cx="13" cy="13" rx="12" ry="5.5" stroke="#555" strokeWidth="1.5" />
          <ellipse cx="13" cy="13" rx="5.5" ry="12.5" stroke="#555" strokeWidth="1.5" />
          <path d="M6 8H20V18H6Z" fill="#f1f1f1" />
          <path d="M8 8V18M18 14V18" stroke="#555" strokeWidth="1.5" />
          <path d="M13 10V16M10 13H16" stroke="#3f7fd0" strokeWidth="1.5" />
          <path d="M17 3V7M15 5H19M21 7V11M19 9H23" stroke="#222" strokeWidth="1.5" />
        </svg>
        <Caret />
      </button>
      <button aria-label="Look at" className="ml-[7px]">
        <svg viewBox="0 0 26 27" className="h-[27px] w-[26px]">
          <path d="M1 9L7 3V8L18 4V9" fill="#eee" stroke="#555" strokeWidth="1.5" />
          <path d="M1 9H24V25H1Z" fill="#d8dade" stroke="#555" strokeWidth="1.5" />
          <path d="M5 13H20V21H5Z" fill="#aab0b8" stroke="#444" strokeWidth="1.5" />
        </svg>
      </button>
      <button aria-label="Pan" className="ml-4">
        <svg viewBox="0 0 27 27" className="size-[27px]">
          <path
            d="M10 25C7 20 4 18 1 14Q3 11 8 15L5 5Q7 2 8 5L11 12L10 3Q12 0 13 3L14 11L16 2Q18 0 19 3L18 12L22 5Q25 4 25 7L21 16Q21 21 19 26H10Z"
            fill="#f7f7f7"
            stroke="#555"
            strokeWidth="1.5"
          />
        </svg>
      </button>
      <button aria-label="Zoom" className="ml-4">
        <svg viewBox="0 0 27 27" fill="none" className="size-[27px]">
          <path d="M17 17L25 24" stroke="#333" strokeWidth="4" />
          <circle cx="10" cy="10" r="9" fill="#eaf4f6" stroke="#777" strokeWidth="2" />
          <path d="M23 1V7M20 4H26M20 10H26" stroke="#555" strokeWidth="1.5" />
        </svg>
      </button>
      <button aria-label="Zoom window" className="ml-4 flex items-center gap-2">
        <svg viewBox="0 0 27 27" fill="none" className="size-[27px]">
          <path d="M1 1H26V26H1Z" stroke="#888" strokeWidth="1.5" strokeDasharray="5 3" />
          <path d="M17 17L25 25" stroke="#333" strokeWidth="4" />
          <circle cx="10" cy="10" r="9" fill="#eaf4f6" stroke="#777" strokeWidth="2" />
        </svg>
        <Caret />
      </button>
      <button aria-label="Display settings" className="ml-[18px] flex items-center gap-1">
        <svg viewBox="0 0 27 27" className="size-[27px]">
          <path d="M1 1H26V20H1Z" fill="#e2e2e2" stroke="#666" strokeWidth="1.5" />
          <path d="M3 3H24V17H3Z" fill="#8fb5e2" stroke="#2f4d77" strokeWidth="1.5" />
          <path d="M11 20H16V23L21 26H6L11 23Z" fill="#ddd" stroke="#555" />
        </svg>
        <Caret />
      </button>
      <button aria-label="Grid and snaps" className="ml-2 flex items-center gap-1">
        <svg viewBox="0 0 26 27" className="h-[27px] w-[26px]">
          <path d="M1 1H25V26H1Z" fill="#eef0f3" stroke="#444" strokeWidth="1.5" />
          <path d="M5 1V26M9 1V26M13 1V26M17 1V26M21 1V26M1 5H25M1 9H25M1 13H25M1 17H25M1 21H25" stroke="#666" />
        </svg>
        <Caret />
      </button>
      <button aria-label="Viewports" className="ml-2 flex items-center gap-1">
        <svg viewBox="0 0 26 27" className="h-[27px] w-[26px]">
          <path d="M1 4H25V24H1Z" fill="#8fb5e2" stroke="#3c5f92" strokeWidth="1.5" />
          <path d="M13 4V24M1 14H25" stroke="#3c5f92" strokeWidth="1.5" />
          <path d="M4 7H10V11H4ZM16 7H22V11H16ZM4 17H10V21H4ZM16 17H22V21H16Z" fill="#a9c8ec" stroke="#6e93c4" />
        </svg>
        <Caret />
      </button>
    </nav>
  );
}

function ViewCube() {
  return (
    <svg viewBox="2200 170 190 136" fill="none" className="h-[136px] w-[190px]">
      <defs>
        <linearGradient id="cubeFace" x1="0" y1="197" x2="0" y2="288" gradientUnits="userSpaceOnUse">
          <stop offset="0" stopColor="#f2f2f2" />
          <stop offset="1" stopColor="#d9d9d9" />
        </linearGradient>
        <filter id="cubeShadow" x="-20%" y="-80%" width="140%" height="260%">
          <feGaussianBlur stdDeviation="3" />
        </filter>
      </defs>
      <path d="M2226 286L2294 278L2362 286L2294 298Z" fill="#aaa" filter="url(#cubeShadow)" />
      <path d="M2228 283H2248" stroke="#7f7ff5" strokeWidth="3" />
      <path d="M2342 283H2362" stroke="#ff9c9c" strokeWidth="3" />
      <path d="M2239 203L2294 197L2349 203V282L2294 288L2239 282Z" fill="url(#cubeFace)" stroke="#999" strokeWidth="1.5" />
      <path d="M2284 214L2294 212L2305 214V271L2294 274L2284 271Z" fill="#d5dae0" opacity=".8" />
      <path d="M2294 197V288" stroke="#777" strokeWidth="1.5" />
      <g textAnchor="middle" className="font-['Liberation_Sans_Narrow','Open_Sans',sans-serif] font-bold">
        <text x="2266" y="248" className="fill-[#9a9da2] text-[14px]">FRONT</text>
        <text x="2323" y="248" className="fill-[#9a9da2] text-[14px]">RIGHT</text>
      </g>
      <g textAnchor="middle" className="font-bold">
        <text x="2294" y="196" className="fill-[#a1fb9c] text-2xl">Y</text>
        <text x="2217" y="293" className="fill-[#8888fa] text-2xl">Z</text>
        <text x="2371" y="293" className="fill-[#ff9c9c] text-2xl">X</text>
      </g>
    </svg>
  );
}

function ChamferPanel() {
  return (
    <form className="mr-[7px] w-[416px] border-2 border-[#d2d2d2] bg-[#f1f1f1]" onSubmit={(e) => e.preventDefault()}>
      <div className="flex h-10 items-center border-b-2 border-[#cbcbcb] pr-1.5 pl-0.5">
        <DockHandle />
        <button type="button" aria-label="Minimise panel" className="ml-[11px]">
          <RoundSign />
        </button>
        <h2 className="ml-[7px] flex-1 text-lg text-[#5c5c5c]">CHAMFER</h2>
        <button type="button" aria-label="Collapse panel">
          <DoubleArrow right />
        </button>
      </div>
      <div className="grid grid-cols-[152px_1fr] auto-rows-[50px] items-center border-b-2 border-[#cbcbcb] pl-5">
        <label htmlFor="edges">Edges</label>
        <div className="flex items-center gap-[18px]">
          <button id="edges" type="button" className="flex h-[45px] w-[145px] items-center gap-2.5 bg-[#3d96d8] pl-[11px] whitespace-nowrap text-white">
            <svg viewBox="0 0 16 26" className="h-[26px] w-4 shrink-0">
              <path d="M1 1V21L6 17L9 24L12 23L9 16H15Z" fill="#f0f0f0" stroke="#333" strokeWidth="1.5" />
            </svg>
            12 selected
          </button>
          <button type="button" aria-label="Clear selection">
            <svg viewBox="0 0 16 16" className="size-4">
              <path d="M2 2L14 14M14 2L2 14" stroke="#555" strokeWidth="3" />
            </svg>
          </button>
        </div>
        <label htmlFor="tangent">Tangent Chain</label>
        <div className="relative ml-2 size-[22px]">
          <input
            id="tangent"
            type="checkbox"
            defaultChecked
            className="peer block size-full appearance-none rounded border-2 border-[#444] bg-linear-to-b from-[#bdbdbd] to-[#f0f0f0]"
          />
          <svg viewBox="0 0 22 22" fill="none" className="pointer-events-none absolute inset-0 hidden peer-checked:block">
            <path d="M5 12L9 17L18 4" stroke="#111" strokeWidth="2.5" />
          </svg>
        </div>
        <label htmlFor="type">Chamfer Type</label>
        <div className="relative w-[218px]">
          <select
            id="type"
            className="block h-11 w-full appearance-none border-2 border-[#cbcbcb] bg-white pl-[37px]"
          >
            <option>Equal distance</option>
            <option>Two distances</option>
            <option>Distance and angle</option>
          </select>
          <svg viewBox="0 0 26 26" className="pointer-events-none absolute top-[9px] left-1.5 size-[26px]">
            <path d="M1 8L6 2H15L25 14V19L19 25H1Z" fill="#e8ecf1" stroke="#666" strokeWidth="1.5" />
            <path d="M9 5L14 1Q24 3 25 13L19 18Q18 7 9 5Z" fill="#a9daf6" stroke="#2c7fb5" strokeWidth="1.5" />
          </svg>
          <span className="pointer-events-none absolute top-[17px] right-1">
            <Caret />
          </span>
        </div>
        <label htmlFor="distance">Distance</label>
        <div className="relative ml-[11px] flex items-center gap-1">
          <input
            id="distance"
            defaultValue="0.75 mm"
            className="h-[35px] w-[184px] border-2 border-[#cbcbcb] bg-white pl-[3px]"
          />
          <span className="absolute top-1.5 left-[45px] h-[22px] w-0.5 bg-black" />
          <button type="button" aria-label="Distance options">
            <Caret />
          </button>
        </div>
      </div>
      <div className="flex h-[60px] items-center pr-2 pl-3">
        <button type="button" aria-label="Information" className="flex-1">
          <svg viewBox="0 0 22 22" className="size-[22px]">
            <circle cx="11" cy="11" r="10.5" />
            <path d="M9 4H13V8H9ZM8 9H13V15H15V17H7V15H9V11H8Z" fill="#fff" />
          </svg>
        </button>
        <button type="submit" className="h-[31px] w-[100px] border-2 border-[#b9b9b9] bg-[#e8e8e8] leading-6 text-[#5c5c5c]">
          OK
        </button>
        <button type="button" className="ml-2.5 h-[31px] w-[100px] border-2 border-[#b9b9b9] bg-[#e8e8e8] leading-6 text-[#5c5c5c]">
          Cancel
        </button>
      </div>
    </form>
  );
}

export default function App() {
  return (
    <div className="flex min-h-screen flex-col bg-white font-['Noto_Sans','Open_Sans',sans-serif] text-[19px] leading-7 text-[#333]">
      <Toolbar />
      <main className="grid flex-1 grid-cols-[1fr_auto_1fr]">
        <div className="flex flex-col justify-between">
          <Browser />
          <Comments />
        </div>
        <div className="flex flex-col items-center justify-between">
          <div className="relative mt-[203px]">
            <RingModel />
            <FloatingValue />
          </div>
          <NavBar />
        </div>
        <div className="flex flex-col items-end">
          <div className="mt-[33px] mr-2.5 mb-[37px]">
            <ViewCube />
          </div>
          <ChamferPanel />
          <p className="mt-auto mr-14 mb-3 font-bold">Multiple selections</p>
        </div>
      </main>
    </div>
  );
}
